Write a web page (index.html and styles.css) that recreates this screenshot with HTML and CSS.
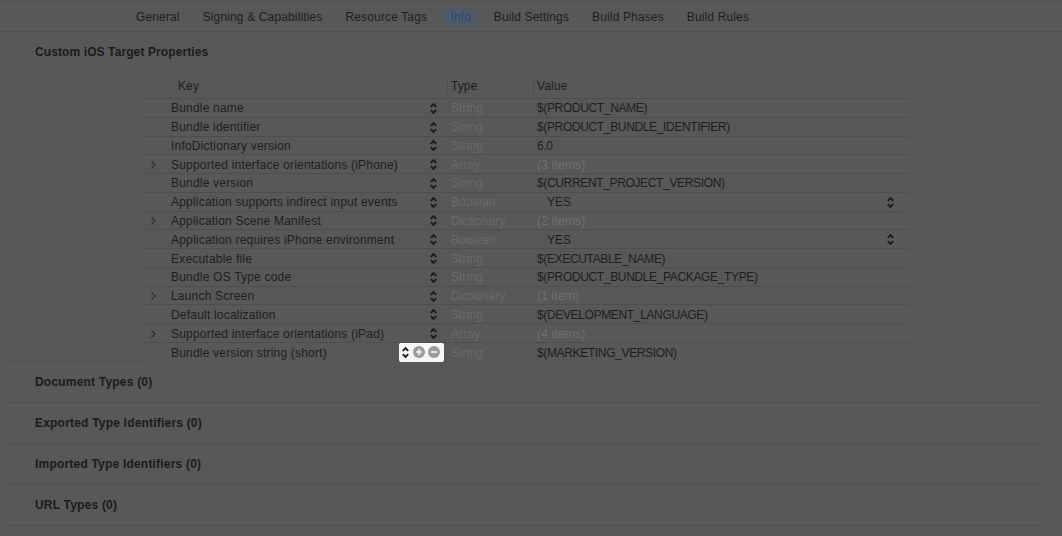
FILE: index.html
```html
<!DOCTYPE html>
<html lang="en">
    <head>
        <meta charset="utf-8" />
        <title>Info - Target Properties</title>
        <link rel="stylesheet" href="styles.css">
    </head>
    <body>
        <nav class="tabs">
            <span class="tab">General</span>
            <span class="tab">Signing &amp; Capabilities</span>
            <span class="tab">Resource Tags</span>
            <span class="tab active">Info</span>
            <span class="tab">Build Settings</span>
            <span class="tab">Build Phases</span>
            <span class="tab">Build Rules</span>
        </nav>

        <main class="main">
            <section class="props">
                <h2 class="title">Custom iOS Target Properties</h2>

                <div class="table">
                    <div class="row head">
                        <span></span>
                        <span class="key">Key</span>
                        <span></span>
                        <span class="col-sep">Type</span>
                        <span class="col-sep">Value</span>
                    </div>

                    <div class="row">
                        <span></span><span>Bundle name</span>
                        <span class="ctl"><svg class="stepper" viewBox="0 0 8 12"><path d="M1.5 4.5 4 2 6.5 4.5M1.5 7.5 4 10 6.5 7.5"/></svg></span>
                        <span class="type">String</span><span class="val">$(PRODUCT_NAME)</span>
                    </div>
                    <div class="row">
                        <span></span><span>Bundle identifier</span>
                        <span class="ctl"><svg class="stepper" viewBox="0 0 8 12"><path d="M1.5 4.5 4 2 6.5 4.5M1.5 7.5 4 10 6.5 7.5"/></svg></span>
                        <span class="type">String</span><span class="val">$(PRODUCT_BUNDLE_IDENTIFIER)</span>
                    </div>
                    <div class="row">
                        <span></span><span>InfoDictionary version</span>
                        <span class="ctl"><svg class="stepper" viewBox="0 0 8 12"><path d="M1.5 4.5 4 2 6.5 4.5M1.5 7.5 4 10 6.5 7.5"/></svg></span>
                        <span class="type">String</span><span class="val">6.0</span>
                    </div>
                    <div class="row">
                        <span class="disclose"><svg viewBox="0 0 8 12"><path d="M2.5 2.5 6 6 2.5 9.5"/></svg></span><span>Supported interface orientations (iPhone)</span>
                        <span class="ctl"><svg class="stepper" viewBox="0 0 8 12"><path d="M1.5 4.5 4 2 6.5 4.5M1.5 7.5 4 10 6.5 7.5"/></svg></span>
                        <span class="type">Array</span><span class="val count">(3 items)</span>
                    </div>
                    <div class="row">
                        <span></span><span>Bundle version</span>
                        <span class="ctl"><svg class="stepper" viewBox="0 0 8 12"><path d="M1.5 4.5 4 2 6.5 4.5M1.5 7.5 4 10 6.5 7.5"/></svg></span>
                        <span class="type">String</span><span class="val">$(CURRENT_PROJECT_VERSION)</span>
                    </div>
                    <div class="row">
                        <span></span><span>Application supports indirect input events</span>
                        <span class="ctl"><svg class="stepper" viewBox="0 0 8 12"><path d="M1.5 4.5 4 2 6.5 4.5M1.5 7.5 4 10 6.5 7.5"/></svg></span>
                        <span class="type">Boolean</span>
                        <span class="val bool">YES<svg class="stepper" viewBox="0 0 8 12"><path d="M1.5 4.5 4 2 6.5 4.5M1.5 7.5 4 10 6.5 7.5"/></svg></span>
                    </div>
                    <div class="row">
                        <span class="disclose"><svg viewBox="0 0 8 12"><path d="M2.5 2.5 6 6 2.5 9.5"/></svg></span><span>Application Scene Manifest</span>
                        <span class="ctl"><svg class="stepper" viewBox="0 0 8 12"><path d="M1.5 4.5 4 2 6.5 4.5M1.5 7.5 4 10 6.5 7.5"/></svg></span>
                        <span class="type">Dictionary</span><span class="val count">(2 items)</span>
                    </div>
                    <div class="row">
                        <span></span><span>Application requires iPhone environment</span>
                        <span class="ctl"><svg class="stepper" viewBox="0 0 8 12"><path d="M1.5 4.5 4 2 6.5 4.5M1.5 7.5 4 10 6.5 7.5"/></svg></span>
                        <span class="type">Boolean</span>
                        <span class="val bool">YES<svg class="stepper" viewBox="0 0 8 12"><path d="M1.5 4.5 4 2 6.5 4.5M1.5 7.5 4 10 6.5 7.5"/></svg></span>
                    </div>
                    <div class="row">
                        <span></span><span>Executable file</span>
                        <span class="ctl"><svg class="stepper" viewBox="0 0 8 12"><path d="M1.5 4.5 4 2 6.5 4.5M1.5 7.5 4 10 6.5 7.5"/></svg></span>
                        <span class="type">String</span><span class="val">$(EXECUTABLE_NAME)</span>
                    </div>
                    <div class="row">
                        <span></span><span>Bundle OS Type code</span>
                        <span class="ctl"><svg class="stepper" viewBox="0 0 8 12"><path d="M1.5 4.5 4 2 6.5 4.5M1.5 7.5 4 10 6.5 7.5"/></svg></span>
                        <span class="type">String</span><span class="val">$(PRODUCT_BUNDLE_PACKAGE_TYPE)</span>
                    </div>
                    <div class="row">
                        <span class="disclose"><svg viewBox="0 0 8 12"><path d="M2.5 2.5 6 6 2.5 9.5"/></svg></span><span>Launch Screen</span>
                        <span class="ctl"><svg class="stepper" viewBox="0 0 8 12"><path d="M1.5 4.5 4 2 6.5 4.5M1.5 7.5 4 10 6.5 7.5"/></svg></span>
                        <span class="type">Dictionary</span><span class="val count">(1 item)</span>
                    </div>
                    <div class="row">
                        <span></span><span>Default localization</span>
                        <span class="ctl"><svg class="stepper" viewBox="0 0 8 12"><path d="M1.5 4.5 4 2 6.5 4.5M1.5 7.5 4 10 6.5 7.5"/></svg></span>
                        <span class="type">String</span><span class="val">$(DEVELOPMENT_LANGUAGE)</span>
                    </div>
                    <div class="row">
                        <span class="disclose"><svg viewBox="0 0 8 12"><path d="M2.5 2.5 6 6 2.5 9.5"/></svg></span><span>Supported interface orientations (iPad)</span>
                        <span class="ctl"><svg class="stepper" viewBox="0 0 8 12"><path d="M1.5 4.5 4 2 6.5 4.5M1.5 7.5 4 10 6.5 7.5"/></svg></span>
                        <span class="type">Array</span><span class="val count">(4 items)</span>
                    </div>
                    <div class="row last">
                        <span></span><span>Bundle version string (short)</span>
                        <span class="ctl">
                            <span class="hover-box">
                                <svg class="stepper" viewBox="0 0 8 12"><path d="M1.5 4.5 4 2 6.5 4.5M1.5 7.5 4 10 6.5 7.5"/></svg>
                                <svg class="round" viewBox="0 0 12 12"><circle cx="6" cy="6" r="6"/><path d="M3 6h6M6 3v6"/></svg>
                                <svg class="round" viewBox="0 0 12 12"><circle cx="6" cy="6" r="6"/><path d="M3 6h6"/></svg>
                            </span>
                        </span>
                        <span class="type">String</span><span class="val">$(MARKETING_VERSION)</span>
                    </div>
                </div>
                <div class="short-rule"></div>
            </section>

            <section class="group"><h2 class="title">Document Types (0)</h2></section>
            <section class="group"><h2 class="title">Exported Type Identifiers (0)</h2></section>
            <section class="group"><h2 class="title">Imported Type Identifiers (0)</h2></section>
            <section class="group"><h2 class="title">URL Types (0)</h2></section>
        </main>
    </body>
</html>
```

FILE: styles.css
```css
:root {
    --bg: #585858;
    --line: #4e4e4e;
    --text: #1e1e1e;
    --dim: #6a6a6a;
}

* {
    margin: 0;
    padding: 0;
    box-sizing: border-box;
}

body {
    background: var(--bg);
    color: var(--text);
    font-family: "Liberation Sans", Arial, sans-serif;
    font-size: 12px;
}

/* tab bar */

.tabs {
    display: flex;
    align-items: center;
    gap: 11px;
    height: 31px;
    margin-top: 1px;
    padding-left: 130px;
    padding-top: 1px;
    border-top: 1px solid var(--line);
    border-bottom: 1px solid var(--line);
    letter-spacing: 0.14px;
}

.tab {
    padding: 3px 6px;
    line-height: 14px;
    border-radius: 5px;
}

.tab.active {
    background: #505a66;
    color: #24487c;
}

/* sections */

.title {
    font-size: 12px;
    font-weight: bold;
    line-height: 20px;
    padding-left: 35px;
    color: #1b1b1b;
    letter-spacing: 0.2px;
}

.props .title {
    margin-top: 10px;
    letter-spacing: 0.1px;
}

.table {
    width: 765px;
    margin: 12px 0 0 144px;
}

.row {
    display: grid;
    grid-template-columns: 27px 257px 19px 86px 1fr;
    align-items: center;
    height: 18.77px;
    padding-top: 1px;
    border-bottom: 1px solid var(--line);
    white-space: nowrap;
    letter-spacing: 0.2px;
}

.row.head {
    height: 25px;
    padding-top: 0;
    letter-spacing: 0.1px;
}

.row.last {
    border-bottom: none;
}

.key {
    padding-left: 7px;
}

.col-sep {
    border-left: 1px solid var(--line);
    padding-left: 3px;
    line-height: 16px;
}

.disclose {
    display: flex;
    padding-left: 5px;
}

.disclose svg {
    width: 8px;
    height: 12px;
    fill: none;
    stroke: #2c2c2c;
    stroke-width: 1.1;
}

.ctl {
    display: flex;
    position: relative;
    height: 100%;
    align-items: center;
}

.stepper {
    width: 9px;
    height: 13px;
    margin-left: 1px;
    fill: none;
    stroke: #1a1a1a;
    stroke-width: 1.7;
}

.type {
    color: var(--dim);
    padding-left: 4px;
    letter-spacing: 0.1px;
}

.val {
    padding-left: 4px;
    letter-spacing: -0.35px;
}

.val.count {
    color: #707070;
    letter-spacing: 0.2px;
}

.val.bool {
    display: flex;
    align-items: center;
    justify-content: space-between;
    padding-left: 14px;
    padding-right: 14px;
    letter-spacing: 0;
}

/* hovered row controls */

.hover-box {
    position: absolute;
    top: -1px;
    bottom: 0;
    right: 3px;
    display: flex;
    align-items: center;
    gap: 3px;
    width: 45px;
    padding-left: 1px;
    background: #f6f6f6;
    border-radius: 2px;
}

.round {
    width: 12px;
    height: 12px;
}

.round circle {
    fill: #9c9c9c;
}

.round path {
    stroke: #f6f6f6;
    stroke-width: 1.6;
}

.short-rule {
    width: 136px;
    height: 1px;
    margin: -1px 0 0 8px;
    background: var(--line);
}

.group {
    display: flex;
    align-items: center;
    height: 41px;
    margin: 0 18px 0 8px;
    padding-top: 1px;
    border-bottom: 1px solid var(--line);
}

.group .title {
    padding-left: 27px;
}
```
